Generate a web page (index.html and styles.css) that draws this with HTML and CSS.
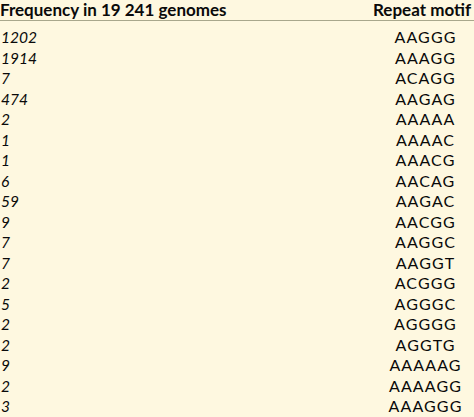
FILE: index.html
```html
<!DOCTYPE html>
<html>
<head>
<meta charset="utf-8">
<link rel="stylesheet" href="styles.css">
</head>
<body>
<div class="table">
  <div class="head">
    <div class="hcell freq">Frequency in 19 241 genomes</div>
    <div class="hcell motif">Repeat motif</div>
  </div>
  <div class="body">
    <div class="row"><div class="num">1202</div><div class="seq">AAGGG</div></div>
    <div class="row"><div class="num">1914</div><div class="seq">AAAGG</div></div>
    <div class="row"><div class="num">7</div><div class="seq">ACAGG</div></div>
    <div class="row"><div class="num">474</div><div class="seq">AAGAG</div></div>
    <div class="row"><div class="num">2</div><div class="seq">AAAAA</div></div>
    <div class="row"><div class="num">1</div><div class="seq">AAAAC</div></div>
    <div class="row"><div class="num">1</div><div class="seq">AAACG</div></div>
    <div class="row"><div class="num">6</div><div class="seq">AACAG</div></div>
    <div class="row"><div class="num">59</div><div class="seq">AAGAC</div></div>
    <div class="row"><div class="num">9</div><div class="seq">AACGG</div></div>
    <div class="row"><div class="num">7</div><div class="seq">AAGGC</div></div>
    <div class="row"><div class="num">7</div><div class="seq">AAGGT</div></div>
    <div class="row"><div class="num">2</div><div class="seq">ACGGG</div></div>
    <div class="row"><div class="num">5</div><div class="seq">AGGGC</div></div>
    <div class="row"><div class="num">2</div><div class="seq">AGGGG</div></div>
    <div class="row"><div class="num">2</div><div class="seq">AGGTG</div></div>
    <div class="row"><div class="num">9</div><div class="seq">AAAAAG</div></div>
    <div class="row"><div class="num">2</div><div class="seq">AAAAGG</div></div>
    <div class="row"><div class="num">3</div><div class="seq">AAAGGG</div></div>
  </div>
</div>
</body>
</html>
```
FILE: styles.css
```css
html, body {
  margin: 0;
  padding: 0;
  background: #fef8e0;
  overflow: hidden;
}
body {
  font-family: "Lato", "Open Sans", sans-serif;
  color: #0a0a0a;
}
.table {
  width: 480px;
}
.head {
  display: grid;
  grid-template-columns: 370px 110px;
  height: 20px;
  border-bottom: 1px solid #a8a78c;
  align-items: end;
}
.hcell {
  font-weight: 700;
  font-size: 17px;
  line-height: 20px;
  margin-top: -4px;
  white-space: nowrap;
}
.motif {
  padding-left: 3px;
}
.body {
  padding-top: 6px;
}
.row {
  display: grid;
  grid-template-columns: 370px 110px;
  height: 20.5px;
  line-height: 20.5px;
  font-size: 16px;
}
.num {
  font-style: italic;
  padding-left: 1px;
  font-size: 15.5px;
}
.seq {
  text-align: center;
  letter-spacing: 1.1px;
  padding-left: 1px;
}
```
